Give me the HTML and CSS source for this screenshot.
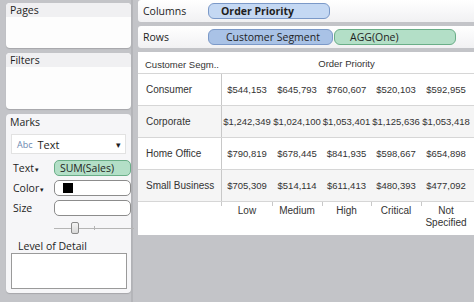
FILE: index.html
```html
<!DOCTYPE html>
<html lang="en">
<head>
    <meta charset="UTF-8">
    <title>Sales by Segment</title>
    <link rel="stylesheet" href="styles.css">
</head>
<body>
    <div class="workspace">
        <div class="sidebar">
            <div class="card card-pages">
                <div class="card-title">Pages</div>
            </div>
            <div class="card card-filters">
                <div class="card-title">Filters</div>
            </div>
            <div class="card card-marks">
                <div class="card-title">Marks</div>
                <div class="mark-type">
                    <span class="abc">Abc</span>
                    <span class="mark-type-name">Text</span>
                    <span class="caret">&#9662;</span>
                </div>
                <div class="mark-row">
                    <span class="mark-label">Text<span class="small-caret">&#9662;</span></span>
                    <span class="mark-field pill-green">SUM(Sales)</span>
                </div>
                <div class="mark-row">
                    <span class="mark-label">Color<span class="small-caret">&#9662;</span></span>
                    <span class="mark-field"><span class="swatch"></span></span>
                </div>
                <div class="mark-row">
                    <span class="mark-label">Size</span>
                    <span class="mark-field"></span>
                </div>
                <div class="slider">
                    <div class="slider-track"></div>
                    <div class="slider-tick"></div>
                    <div class="slider-thumb"></div>
                </div>
                <div class="detail-label">Level of Detail</div>
                <div class="detail-box"></div>
            </div>
        </div>

        <div class="main">
            <div class="shelf shelf-columns">
                <span class="shelf-label">Columns</span>
                <span class="pill pill-blue pill-bold">Order Priority</span>
            </div>
            <div class="shelf shelf-rows">
                <span class="shelf-label">Rows</span>
                <span class="pill pill-dark">Customer Segment</span>
                <span class="pill pill-green pill-agg">AGG(One)</span>
            </div>

            <div class="view">
                <div class="crosstab">
                    <div class="head-row">
                        <div class="row-title">Customer Segm..</div>
                        <div class="col-title">Order Priority</div>
                    </div>
                    <div class="data-row">
                        <div class="row-name">Consumer</div>
                        <div class="cell">$544,153</div>
                        <div class="cell">$645,793</div>
                        <div class="cell">$760,607</div>
                        <div class="cell">$520,103</div>
                        <div class="cell">$592,955</div>
                    </div>
                    <div class="data-row alt">
                        <div class="row-name">Corporate</div>
                        <div class="cell">$1,242,349</div>
                        <div class="cell">$1,024,100</div>
                        <div class="cell">$1,053,401</div>
                        <div class="cell">$1,125,636</div>
                        <div class="cell">$1,053,418</div>
                    </div>
                    <div class="data-row">
                        <div class="row-name">Home Office</div>
                        <div class="cell">$790,819</div>
                        <div class="cell">$678,445</div>
                        <div class="cell">$841,935</div>
                        <div class="cell">$598,667</div>
                        <div class="cell">$654,898</div>
                    </div>
                    <div class="data-row alt">
                        <div class="row-name">Small Business</div>
                        <div class="cell">$705,309</div>
                        <div class="cell">$514,114</div>
                        <div class="cell">$611,413</div>
                        <div class="cell">$480,393</div>
                        <div class="cell">$477,092</div>
                    </div>
                    <div class="foot-row">
                        <div class="foot-spacer"></div>
                        <div class="foot-cell">Low</div>
                        <div class="foot-cell tick">Medium</div>
                        <div class="foot-cell tick">High</div>
                        <div class="foot-cell tick">Critical</div>
                        <div class="foot-cell tick">Not<br>Specified</div>
                    </div>
                </div>
            </div>
        </div>
    </div>
</body>
</html>
```

FILE: styles.css
```css
:root {
    --workspace-grey: #c3c4c8;
    --card-bg: #fdfdfd;
    --card-head: #f0f0f2;
    --line: #d6d6d6;
    --text: #1e1e1e;
    --cell-text: #333;
    --blue-fill: #c4d8f3;
    --blue-dark-fill: #a9c2e6;
    --blue-border: #7b99c8;
    --green-fill: #b3dfc7;
    --green-border: #6aae88;
}

body {
    margin: 0;
    background-color: var(--workspace-grey);
    font-family: "Open Sans", "Noto Sans", sans-serif;
    color: var(--text);
    width: 474px;
    height: 302px;
    overflow: hidden;
}

.workspace {
    display: grid;
    grid-template-columns: 127px 1fr;
    column-gap: 5px;
    padding-left: 6px;
    height: 302px;
}

/* left side cards */

.sidebar {
    display: flex;
    flex-direction: column;
    gap: 5px;
    padding-top: 3px;
    border-right: 2px solid #b4b5b9;
}

.card {
    background-color: var(--card-bg);
    border-radius: 4px;
    box-shadow: 0 1px 1px rgba(0, 0, 0, 0.15);
}

.card-pages {
    height: 45px;
}

.card-filters {
    height: 56px;
}

.card-marks {
    height: 179px;
    background-color: #f6f6f8;
}

.card-title {
    height: 14px;
    line-height: 14px;
    padding-left: 4px;
    font-size: 10.5px;
    background-color: var(--card-head);
    border-radius: 4px 4px 0 0;
}

.card-marks .card-title {
    height: 17px;
    line-height: 17px;
    background-color: transparent;
}

.mark-type {
    display: flex;
    align-items: center;
    height: 18px;
    margin: 3px 5px 6px 5px;
    background-color: #fff;
    border: 1px solid #e2e2e2;
    font-size: 11px;
}

.abc {
    color: #6c88b0;
    font-size: 9px;
    margin-left: 5px;
    margin-right: 5px;
}

.mark-type-name {
    flex: 1;
}

.caret {
    font-size: 9px;
    margin-right: 4px;
}

.mark-row {
    display: flex;
    align-items: center;
    height: 16px;
    margin-bottom: 4px;
    padding-left: 7px;
}

.mark-label {
    width: 42px;
    font-size: 10.5px;
}

.small-caret {
    font-size: 7px;
    margin-left: 1px;
}

.mark-field {
    display: flex;
    align-items: center;
    box-sizing: border-box;
    width: 79px;
    height: 16px;
    border: 1px solid #8c8c8c;
    border-radius: 5px;
    background-color: #fff;
    font-size: 10.5px;
    padding-left: 6px;
}

.mark-field.pill-green {
    background-color: var(--green-fill);
    border-color: var(--green-border);
    padding-left: 5px;
}

.swatch {
    width: 10px;
    height: 10px;
    background-color: #000;
    margin-left: 2px;
}

.slider {
    position: relative;
    height: 14px;
    margin: 6px 0 4px 48px;
    width: 80px;
}

.slider-track {
    position: absolute;
    left: 0;
    right: 0;
    top: 6px;
    height: 1px;
    background-color: #b5b5b5;
}

.slider-tick {
    position: absolute;
    left: 40px;
    top: 4px;
    width: 1px;
    height: 4px;
    background-color: #b5b5b5;
}

.slider-thumb {
    position: absolute;
    left: 17px;
    top: 0;
    box-sizing: border-box;
    width: 8px;
    height: 12px;
    border: 1px solid #8a8a8a;
    border-radius: 2px;
    background: linear-gradient(#f4f4f4, #d8d8d8);
}

.detail-label {
    font-size: 10.5px;
    padding-left: 12px;
    line-height: 12px;
    margin-bottom: 1px;
}

.detail-box {
    box-sizing: border-box;
    height: 36px;
    margin: 0 4px 0 5px;
    border: 1px solid #9a9a9a;
    background-color: #fff;
}

/* shelves */

.main {
    display: flex;
    flex-direction: column;
    gap: 4px;
}

.shelf {
    display: flex;
    align-items: center;
    height: 22px;
    background: linear-gradient(#ffffff, #f1f1f3);
    border-radius: 3px 0 0 3px;
    font-size: 10.5px;
}

.shelf-label {
    width: 65px;
    padding-left: 5px;
}

.pill {
    display: flex;
    align-items: center;
    box-sizing: border-box;
    height: 16px;
    border: 1px solid var(--blue-border);
    border-radius: 6px;
    font-size: 10.5px;
}

.pill-blue {
    width: 122px;
    background-color: var(--blue-fill);
    padding-left: 12px;
}

.pill-bold {
    font-weight: bold;
}

.pill-dark {
    width: 125px;
    background-color: var(--blue-dark-fill);
    padding-left: 17px;
}

.pill-green {
    background-color: var(--green-fill);
    border-color: var(--green-border);
}

.pill-agg {
    width: 122px;
    padding-left: 15px;
    margin-left: 1px;
}

/* crosstab view */

.view {
    height: 183px;
    background-color: #fff;
}

.crosstab {
    font-family: "Liberation Sans", Arial, sans-serif;
    font-size: 9.5px;
    color: var(--cell-text);
}

.head-row {
    display: grid;
    grid-template-columns: 84px 249px;
    height: 21px;
    align-items: center;
    border-bottom: 1px solid var(--line);
}

.row-title {
    padding-left: 7px;
    padding-top: 3px;
    white-space: nowrap;
}

.col-title {
    text-align: center;
    padding-top: 1px;
}

.data-row,
.foot-row {
    display: grid;
    grid-template-columns: 84px 50px 50px 49px 50px 50px;
}

.data-row {
    height: 31px;
    align-items: center;
    border-bottom: 1px solid var(--line);
}

.data-row.alt {
    background-color: #f5f5f5;
}

.row-name {
    height: 100%;
    display: flex;
    align-items: center;
    padding-left: 8px;
    border-right: 1px solid #c8c8c8;
    box-sizing: border-box;
    font-size: 10px;
}

.cell {
    text-align: center;
    white-space: nowrap;
}

.foot-row {
    align-items: start;
}

.foot-spacer {
    height: 4px;
    border-right: 1px solid #c8c8c8;
}

.foot-cell {
    position: relative;
    text-align: center;
    padding-top: 3px;
    line-height: 12px;
    font-size: 10px;
}

.foot-cell.tick::before {
    content: "";
    position: absolute;
    left: 0;
    top: 0;
    width: 1px;
    height: 4px;
    background-color: #c8c8c8;
}
```
